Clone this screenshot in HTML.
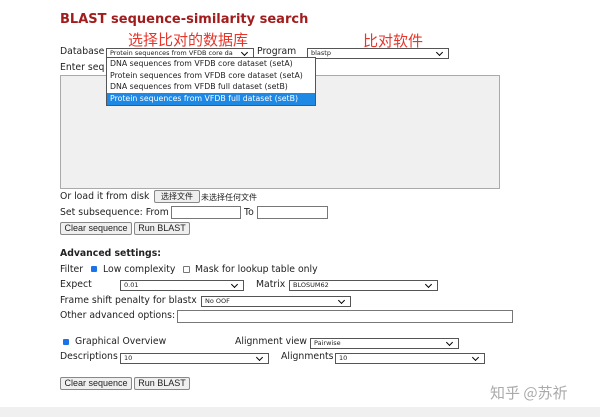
<!DOCTYPE html>
<html><head><meta charset="utf-8"><style>
body{margin:0;width:600px;height:417px;background:#fff;position:relative;overflow:hidden;font-family:"DejaVu Sans","Noto Sans CJK SC",sans-serif;font-size:9.3px;color:#222}
.a{position:absolute;white-space:nowrap}
.sel{position:absolute;height:9px;border:1px solid #555;background:#fff;font-size:6.5px;line-height:9px;padding-left:3px;box-sizing:content-box;overflow:hidden;white-space:nowrap}
.sel:after{content:"";position:absolute;right:6px;top:1px;width:4px;height:4px;border-right:1.5px solid #000;border-bottom:1.5px solid #000;transform:rotate(45deg)}
.inp{position:absolute;height:11px;border:1px solid #777;background:#fff}
.btn{position:absolute;height:11px;border:1px solid #888;background:#efefef;font-family:"Liberation Sans","Noto Sans CJK SC",sans-serif;font-size:9px;line-height:11px;text-align:center;border-radius:2px;white-space:nowrap}
.cb{position:absolute;width:6px;height:6px;border-radius:1px}
.red{color:#e8352a;font-family:"Noto Sans CJK SC",sans-serif;font-size:15px}
</style></head><body>
<div class="a" style="left:60px;top:12px;font-size:13px;font-weight:bold;color:#a11d1d;font-family:'DejaVu Sans',sans-serif;">BLAST sequence-similarity search</div>
<div class="a red" style="left:128px;top:29px;">选择比对的数据库</div>
<div class="a red" style="left:363px;top:30px;">比对软件</div>
<div class="a" style="left:60px;top:46px;">Database</div>
<div class="sel" style="left:106px;top:48px;width:143px;">Protein sequences from VFDB core da</div>
<div class="a" style="left:257px;top:46px;">Program</div>
<div class="sel" style="left:307px;top:48px;width:137px;">blastp</div>
<div class="a" style="left:60px;top:62px;">Enter seq</div>
<div style="position:absolute;left:60px;top:75px;width:438px;height:112px;border:1px solid #aaa;background:#f0f0f0"></div>
<div style="position:absolute;left:106px;top:57px;width:208px;height:47px;border:1px solid #555;background:#fff;font-size:7.8px;line-height:11.7px;white-space:nowrap;overflow:hidden">
<div style="padding-left:3px">DNA sequences from VFDB core dataset (setA)</div>
<div style="padding-left:3px">Protein sequences from VFDB core dataset (setA)</div>
<div style="padding-left:3px">DNA sequences from VFDB full dataset (setB)</div>
<div style="padding-left:3px;background:#1e88e5;color:#fff">Protein sequences from VFDB full dataset (setB)</div>
</div>
<div class="a" style="left:60px;top:191px;">Or load it from disk</div>
<div class="btn" style="left:154px;top:190px;width:44px;font-size:8px">选择文件</div>
<div class="a" style="left:201px;top:192px;font-size:8px;font-family:'Noto Sans CJK SC',sans-serif">未选择任何文件</div>
<div class="a" style="left:60px;top:207px;">Set subsequence: From</div>
<div class="inp" style="left:171px;top:206px;width:68px"></div>
<div class="a" style="left:244px;top:207px;">To</div>
<div class="inp" style="left:257px;top:206px;width:69px"></div>
<div class="btn" style="left:60px;top:222px;width:70px">Clear sequence</div>
<div class="btn" style="left:134px;top:222px;width:54px">Run BLAST</div>
<div class="a" style="left:60px;top:248px;font-weight:bold">Advanced settings:</div>
<div class="a" style="left:60px;top:264px;">Filter</div>
<div class="cb" style="left:91px;top:266px;background:#1a73e8"></div>
<div class="a" style="left:103px;top:264px;">Low complexity</div>
<div class="cb" style="left:183px;top:266px;border:1px solid #777;width:5px;height:5px"></div>
<div class="a" style="left:195px;top:264px;">Mask for lookup table only</div>
<div class="a" style="left:60px;top:279px;">Expect</div>
<div class="sel" style="left:120px;top:280px;width:119px">0.01</div>
<div class="a" style="left:256px;top:279px;">Matrix</div>
<div class="sel" style="left:289px;top:280px;width:144px">BLOSUM62</div>
<div class="a" style="left:60px;top:295px;">Frame shift penalty for blastx</div>
<div class="sel" style="left:201px;top:296px;width:145px">No OOF</div>
<div class="a" style="left:60px;top:310px;">Other advanced options:</div>
<div class="inp" style="left:177px;top:310px;width:334px"></div>
<div class="cb" style="left:63px;top:339px;background:#1a73e8"></div>
<div class="a" style="left:75px;top:336px;">Graphical Overview</div>
<div class="a" style="left:235px;top:336px;">Alignment view</div>
<div class="sel" style="left:310px;top:338px;width:144px">Pairwise</div>
<div class="a" style="left:60px;top:351px;">Descriptions</div>
<div class="sel" style="left:120px;top:353px;width:144px">10</div>
<div class="a" style="left:281px;top:351px;">Alignments</div>
<div class="sel" style="left:335px;top:353px;width:145px">10</div>
<div class="btn" style="left:60px;top:377px;width:70px">Clear sequence</div>
<div class="btn" style="left:134px;top:377px;width:54px">Run BLAST</div>
<div class="a" style="left:490px;top:382px;font-size:15px;color:#aaa;font-family:'Noto Sans CJK SC',sans-serif">知乎 @苏祈</div>
<div style="position:absolute;left:0;top:407px;width:600px;height:10px;background:#f0f0f0"></div>
</body></html>
